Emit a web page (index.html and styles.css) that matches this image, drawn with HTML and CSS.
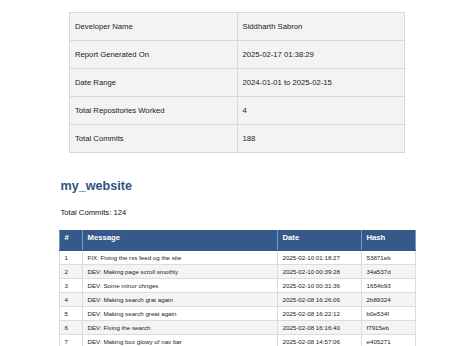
FILE: index.html
```html
<!DOCTYPE html>
<html>
<head>
<meta charset="utf-8">
<link rel="stylesheet" href="styles.css">
</head>
<body>
<table class="summary">
  <tr><td>Developer Name</td><td>Siddharth Sabron</td></tr>
  <tr><td>Report Generated On</td><td>2025-02-17 01:38:29</td></tr>
  <tr><td>Date Range</td><td>2024-01-01 to 2025-02-15</td></tr>
  <tr><td>Total Repositories Worked</td><td>4</td></tr>
  <tr><td>Total Commits</td><td>188</td></tr>
</table>
<section class="repo">
  <h2 class="repo-title">my_website</h2>
  <p class="repo-total">Total Commits: 124</p>
  <table class="commits">
    <thead>
      <tr><th class="c-num">#</th><th class="c-msg">Message</th><th class="c-date">Date</th><th class="c-hash">Hash</th></tr>
    </thead>
    <tbody>
      <tr><td>1</td><td>FIX: Fixing the rss feed og the site</td><td>2025-02-10 01:18:27</td><td>53871eb</td></tr>
      <tr><td>2</td><td>DEV: Making page scroll smothly</td><td>2025-02-10 00:39:28</td><td>34a537d</td></tr>
      <tr><td>3</td><td>DEV: Some minor chnges</td><td>2025-02-10 00:31:36</td><td>1654b93</td></tr>
      <tr><td>4</td><td>DEV: Making search grat again</td><td>2025-02-08 16:26:06</td><td>2b89324</td></tr>
      <tr><td>5</td><td>DEV: Making search great again</td><td>2025-02-08 16:22:12</td><td>b0e534f</td></tr>
      <tr><td>6</td><td>DEV: Fixing the search</td><td>2025-02-08 16:16:40</td><td>f7915eb</td></tr>
      <tr><td>7</td><td>DEV: Making box glowy of nav bar</td><td>2025-02-08 14:57:06</td><td>e405271</td></tr>
    </tbody>
  </table>
</section>
</body>
</html>
```

FILE: styles.css
```css
html, body {
  margin: 0;
  padding: 0;
  background: #ffffff;
  font-family: "Liberation Sans", Arial, Helvetica, sans-serif;
  color: #222;
}

body {
  padding-top: 12px;
}

.summary {
  width: 336px;
  margin: 0 auto;
  border-collapse: collapse;
  table-layout: fixed;
  background: #f3f3f3;
}

.summary td {
  border: 1px solid #d8d8d8;
  height: 27px;
  padding: 0 5px;
  font-size: 7.7px;
  line-height: 10px;
  vertical-align: middle;
  color: #1a1a1a;
}

.repo {
  width: 357px;
  margin: 0 auto;
}

.repo-title {
  margin: 25px 0 0 2px;
  font-size: 12.6px;
  line-height: 16px;
  font-weight: bold;
  color: #2f5383;
}

.repo-total {
  margin: 14px 0 0 2px;
  font-size: 7.7px;
  line-height: 10px;
  color: #111;
}

.commits {
  width: 357px;
  margin-top: 12px;
  border-collapse: collapse;
  table-layout: fixed;
}

.commits th {
  background: #35598a;
  color: #ffffff;
  font-size: 7.7px;
  font-weight: bold;
  text-align: left;
  vertical-align: top;
  height: 17px;
  padding: 2px 5px 0;
  line-height: 10px;
  border: 1px solid #7d98bd;
  border-top-color: #35598a;
  border-bottom-color: #35598a;
}

.c-num { width: 12px; }
.c-msg { width: 184px; }
.c-date { width: 73px; }
.c-hash { width: auto; }

.commits td {
  border: 1px solid #dcdcdc;
  height: 13px;
  padding: 0 5px;
  font-size: 6.2px;
  line-height: 8px;
  vertical-align: middle;
  color: #1a1a1a;
  white-space: nowrap;
}

.commits tbody tr:nth-child(even) td {
  background: #f4f4f4;
}
```
